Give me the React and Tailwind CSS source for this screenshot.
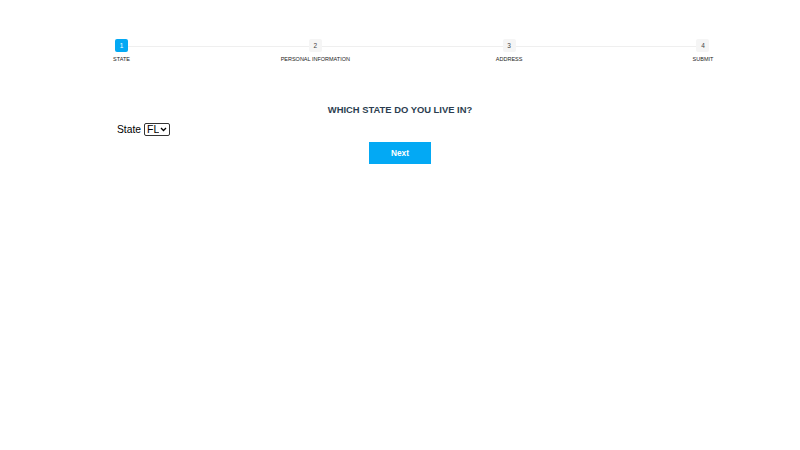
import React from "react";

const steps = ["STATE", "PERSONAL INFORMATION", "ADDRESS", "SUBMIT"];

export default function App() {
  return (
    <div className="w-[800px] h-[450px] bg-white overflow-hidden" style={{ fontFamily: '"Liberation Sans", Arial, sans-serif' }}>
      <div className="pt-[39px] pl-[121.5px] pr-[97px]">
        <div className="relative">
          <div className="absolute left-0 right-0 top-[6.5px] h-px bg-[#efefef]" />
          <div className="relative flex justify-between">
            {steps.map((s, i) => (
              <div key={s} className="w-0 flex flex-col items-center">
                <div
                  className={
                    "w-[13px] h-[13px] shrink-0 rounded-[2px] flex items-center justify-center text-[6.5px] " +
                    (i === 0 ? "bg-[#03a9f4] text-white" : "bg-[#f5f5f5] text-[#444]")
                  }
                >
                  {i + 1}
                </div>
                <div className="mt-[3px] whitespace-nowrap text-[5.5px] leading-[8px] text-[#222]">{s}</div>
              </div>
            ))}
          </div>
        </div>
      </div>
      <div className="mt-[41px] text-center font-bold text-[9.4px] leading-[12px] text-[#2c3e50]">
        WHICH STATE DO YOU LIVE IN?
      </div>
      <div className="pl-[117px] mt-[6px] flex items-center h-[14px]">
        <span className="text-[10.3px] text-black leading-[14px] pt-[1px]">State</span>
        <select
          defaultValue="FL"
          className="ml-[3px] w-[26px] h-[13px] text-[10.5px] leading-[11px] border border-[#333] rounded-[2px] pl-[2px] pr-[10px] py-0 bg-white text-black appearance-none"
          style={{ fontFamily: '"Liberation Sans", Arial, sans-serif' }}
        >
          <option value="FL">FL</option>
          <option value="CA">CA</option>
          <option value="NY">NY</option>
        </select>
        <svg className="-ml-[10px] pointer-events-none" width="7" height="5" viewBox="0 0 7 5">
          <path d="M1 1 L3.5 3.5 L6 1" fill="none" stroke="#000" strokeWidth="1.3" />
        </svg>
      </div>
      <div className="flex justify-center mt-[6px]">
        <button className="w-[62px] h-[22px] bg-[#03a9f4] text-white font-bold text-[8.3px]">Next</button>
      </div>
    </div>
  );
}
